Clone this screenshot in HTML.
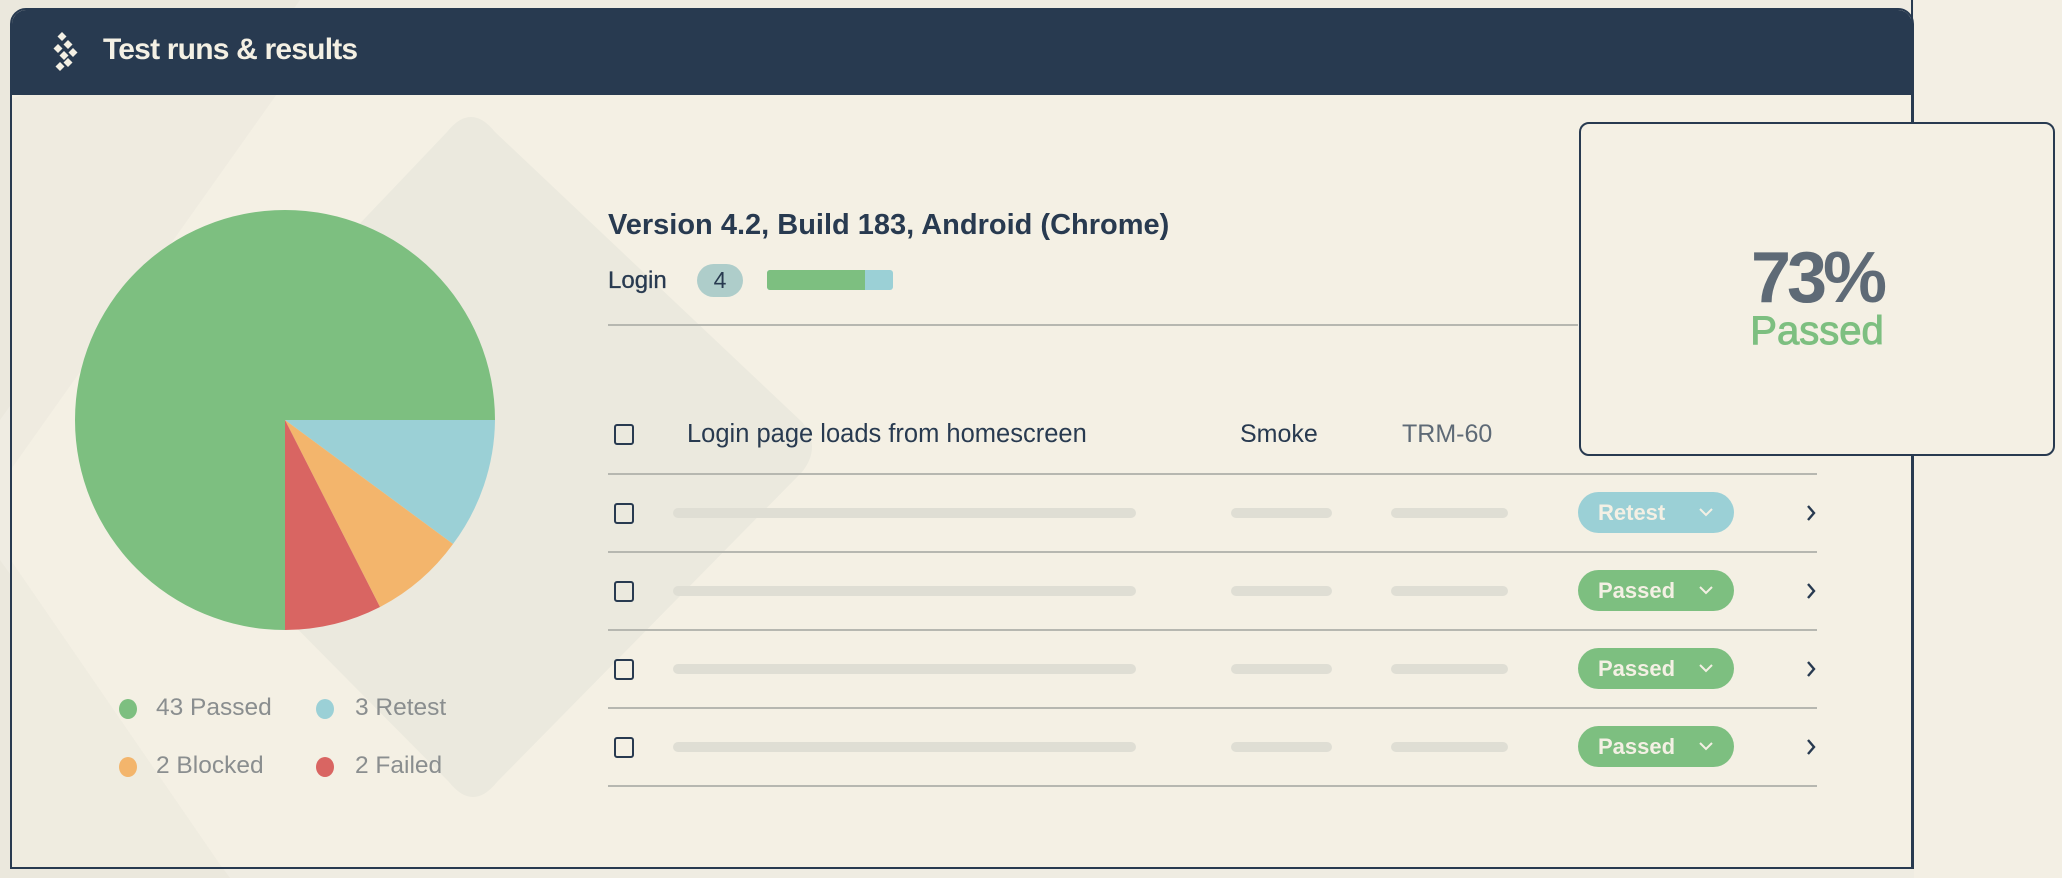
<!DOCTYPE html>
<html><head><meta charset="utf-8"><style>
*{margin:0;padding:0;box-sizing:border-box}
body{width:2062px;height:878px;background:#efece2;position:relative;overflow:hidden;font-family:"Liberation Sans",sans-serif;color:#283a50}
.abs{position:absolute}
.card{left:10px;top:8px;width:1904px;height:861px;border:2px solid #283a50;border-radius:16px 16px 0 0;background:#f4f0e4;overflow:hidden}
.hdr{left:0;top:0;width:100%;height:85px;background:#283a50}
.t{white-space:nowrap}
.cb{width:20px;height:21px;border:2px solid #283a50;border-radius:3px}
.line{height:2px;background:#b6b7b0;left:608px;width:1209px}
.ph{height:10px;border-radius:5px;background:#dfded4}
.pill{left:1578px;width:156px;height:41px;border-radius:21px;color:#f4f0e4;font-size:22px;font-weight:bold;line-height:41px;padding-left:20px}
.pill svg{position:absolute;right:20px;top:14px}
.lg{font-size:24.5px;color:#8a8e8f}
.dot{width:18px;height:20px;border-radius:50%}
</style></head><body>
<svg class="abs" style="left:0;top:0" width="2062" height="878">
<polygon points="0,0 300,0 0,420" fill="#ebe8dd"/>
<polygon points="0,560 230,878 0,878" fill="#ebe8dd"/>
</svg>
<div class="abs card">
<svg class="abs" style="left:-10px;top:-8px" width="1920" height="880">
<polygon points="0,100 300,0 340,0 0,480" fill="#ebe8dd" opacity="0.6"/>
<path d="M445,130 Q469,100 493,130 L800,420 Q820,445 800,470 L495,780 Q471,810 447,780 L150,480 Q135,460 150,440 Z" fill="#ebe9de"/>
<polygon points="10,560 230,880 10,880" fill="#ecE9de" opacity="0.7"/>
<g transform="translate(283,418)">
<path d="M0,0 L210,0 A210,210 0 1,0 0,210 Z" fill="#7dbf80"/>
<path d="M0,0 L210,0 A210,210 0 0,1 168,124 Z" fill="#9bd0d6"/>
<path d="M0,0 L168,124 A210,210 0 0,1 95,187 Z" fill="#f3b56c"/>
<path d="M0,0 L95,187 A210,210 0 0,1 0,210 Z" fill="#d96562"/>
</g>
</svg>
<div class="abs hdr"></div>
</div>
<svg class="abs" style="left:52px;top:31px" width="26" height="42" viewBox="0 0 26 42">
<g fill="#f4f0e4"><path d="M10,1l4.5,4.5-4.5,4.5-4.5-4.5z"/><path d="M16,9l4.5,4.5-4.5,4.5-4.5-4.5z"/><path d="M6,13l4.5,4.5-4.5,4.5-4.5-4.5z"/><path d="M21,17l4.5,4.5-4.5,4.5-4.5-4.5z"/><path d="M12,20l4.5,4.5-4.5,4.5-4.5-4.5z"/><path d="M16,27l4.5,4.5-4.5,4.5-4.5-4.5z"/><path d="M8,31l4.5,4.5-4.5,4.5-4.5-4.5z"/></g>
</svg>
<div class="abs t" style="left:103px;top:33px;font-size:30px;font-weight:bold;color:#f4f0e4;letter-spacing:-0.8px">Test runs &amp; results</div>

<div class="abs dot" style="left:119px;top:699px;background:#7dbf80"></div>
<div class="abs t lg" style="left:156px;top:694px">43 Passed</div>
<div class="abs dot" style="left:316px;top:699px;background:#9bd0d6"></div>
<div class="abs t lg" style="left:355px;top:694px">3 Retest</div>
<div class="abs dot" style="left:119px;top:757px;background:#f3b56c"></div>
<div class="abs t lg" style="left:156px;top:752px">2 Blocked</div>
<div class="abs dot" style="left:316px;top:757px;background:#d96562"></div>
<div class="abs t lg" style="left:355px;top:752px">2 Failed</div>

<div class="abs t" style="left:608px;top:209px;font-size:29px;font-weight:bold">Version 4.2, Build 183, Android (Chrome)</div>
<div class="abs t" style="left:608px;top:267px;font-size:24px;-webkit-text-stroke:0.3px #283a50">Login</div>
<div class="abs" style="left:697px;top:264px;width:46px;height:33px;border-radius:17px;background:#aecdca;font-size:23px;text-align:center;line-height:33px">4</div>
<div class="abs" style="left:767px;top:270px;width:126px;height:20px;border-radius:3px;background:#9bd0d6;overflow:hidden"><div style="width:98px;height:20px;background:#7dbf80"></div></div>
<div class="abs line" style="top:324px;width:970px"></div>

<div class="abs" style="left:1914px;top:0;width:148px;height:878px;background:#f3efe4"></div>
<div class="abs" style="left:1911px;top:0;width:2px;height:868px;background:#283a50"></div>
<div class="abs" style="left:1579px;top:122px;width:476px;height:334px;border:2px solid #283a50;border-radius:10px;background:#f4f0e4;text-align:center">
<div style="margin-top:121px;font-size:72px;font-weight:bold;color:#5e6a76;letter-spacing:-4px;line-height:66px">73%</div>
<div style="font-size:40px;color:#7dbf80;line-height:40px;-webkit-text-stroke:1px #7dbf80">Passed</div>
</div>

<div class="abs cb" style="left:614px;top:424px"></div>
<div class="abs t" style="left:687px;top:420px;font-size:25.5px">Login page loads from homescreen</div>
<div class="abs t" style="left:1240px;top:420px;font-size:25px">Smoke</div>
<div class="abs t" style="left:1402px;top:420px;font-size:25px;color:#5e6a76">TRM-60</div>
<div class="abs line" style="top:473px"></div>

<div class="abs cb" style="left:614px;top:503px"></div>
<div class="abs ph" style="left:673px;top:508px;width:463px"></div>
<div class="abs ph" style="left:1231px;top:508px;width:101px"></div>
<div class="abs ph" style="left:1391px;top:508px;width:117px"></div>
<div class="abs pill" style="top:492px;background:#9bd0d6">Retest<svg width="16" height="12"><path d="M2,3l6,6 6-6" stroke="#f4f0e4" stroke-width="2" fill="none"/></svg></div>
<div class="abs line" style="top:551px"></div>

<div class="abs cb" style="left:614px;top:581px"></div>
<div class="abs ph" style="left:673px;top:586px;width:463px"></div>
<div class="abs ph" style="left:1231px;top:586px;width:101px"></div>
<div class="abs ph" style="left:1391px;top:586px;width:117px"></div>
<div class="abs pill" style="top:570px;background:#7dbf80">Passed<svg width="16" height="12"><path d="M2,3l6,6 6-6" stroke="#f4f0e4" stroke-width="2" fill="none"/></svg></div>
<div class="abs line" style="top:629px"></div>

<div class="abs cb" style="left:614px;top:659px"></div>
<div class="abs ph" style="left:673px;top:664px;width:463px"></div>
<div class="abs ph" style="left:1231px;top:664px;width:101px"></div>
<div class="abs ph" style="left:1391px;top:664px;width:117px"></div>
<div class="abs pill" style="top:648px;background:#7dbf80">Passed<svg width="16" height="12"><path d="M2,3l6,6 6-6" stroke="#f4f0e4" stroke-width="2" fill="none"/></svg></div>
<div class="abs line" style="top:707px"></div>

<div class="abs cb" style="left:614px;top:737px"></div>
<div class="abs ph" style="left:673px;top:742px;width:463px"></div>
<div class="abs ph" style="left:1231px;top:742px;width:101px"></div>
<div class="abs ph" style="left:1391px;top:742px;width:117px"></div>
<div class="abs pill" style="top:726px;background:#7dbf80">Passed<svg width="16" height="12"><path d="M2,3l6,6 6-6" stroke="#f4f0e4" stroke-width="2" fill="none"/></svg></div>
<div class="abs line" style="top:785px"></div>

<svg class="abs" style="left:1804px;top:503px" width="14" height="20"><path d="M4,3l6,7-6,7" stroke="#283a50" stroke-width="2.4" fill="none"/></svg>
<svg class="abs" style="left:1804px;top:581px" width="14" height="20"><path d="M4,3l6,7-6,7" stroke="#283a50" stroke-width="2.4" fill="none"/></svg>
<svg class="abs" style="left:1804px;top:659px" width="14" height="20"><path d="M4,3l6,7-6,7" stroke="#283a50" stroke-width="2.4" fill="none"/></svg>
<svg class="abs" style="left:1804px;top:737px" width="14" height="20"><path d="M4,3l6,7-6,7" stroke="#283a50" stroke-width="2.4" fill="none"/></svg>
</body></html>
